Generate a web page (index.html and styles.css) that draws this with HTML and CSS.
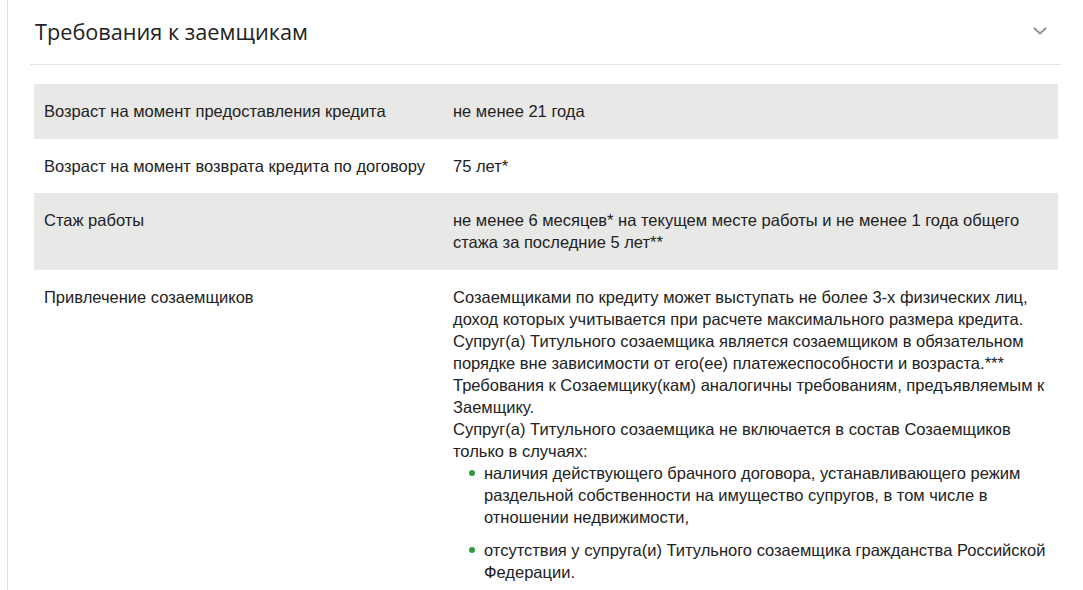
FILE: index.html
```html
<!DOCTYPE html>
<html lang="ru">
<head>
<meta charset="utf-8">
<title>Требования к заемщикам</title>
<link rel="stylesheet" href="styles.css">
</head>
<body>
<div class="page">
  <section class="block">
    <header class="block-head">
      <h2 class="block-title">Требования к заемщикам</h2>
      <svg class="chevron" width="14" height="9" viewBox="0 0 14 9"><path d="M1.5 1.5 L7 6.5 L12.5 1.5" fill="none" stroke="#9a9a9a" stroke-width="2.2" stroke-linecap="round" stroke-linejoin="round"/></svg>
    </header>
    <div class="table">
      <div class="row shaded">
        <div class="cell label">Возраст на момент предоставления кредита</div>
        <div class="cell value">не менее 21 года</div>
      </div>
      <div class="row">
        <div class="cell label">Возраст на момент возврата кредита по договору</div>
        <div class="cell value">75 лет*</div>
      </div>
      <div class="row shaded">
        <div class="cell label">Стаж работы</div>
        <div class="cell value">не менее 6 месяцев* на текущем месте работы и не менее 1 года общего стажа за последние 5 лет**</div>
      </div>
      <div class="row">
        <div class="cell label">Привлечение созаемщиков</div>
        <div class="cell value">
          Созаемщиками по кредиту может выступать не более 3-х физических лиц, доход которых учитывается при расчете максимального размера кредита.<br>
          Супруг(а) Титульного созаемщика является созаемщиком в обязательном порядке вне зависимости от его(ее) платежеспособности и возраста.***<br>
          Требования к Созаемщику(кам) аналогичны требованиям, предъявляемым к Заемщику.<br>
          Супруг(а) Титульного созаемщика не включается в состав Созаемщиков только в случаях:
          <ul class="dots">
            <li>наличия действующего брачного договора, устанавливающего режим раздельной собственности на имущество супругов, в том числе в отношении недвижимости,</li>
            <li>отсутствия у супруга(и) Титульного созаемщика гражданства Российской Федерации.</li>
          </ul>
        </div>
      </div>
    </div>
  </section>
</div>
</body>
</html>
```

FILE: styles.css
```css
html, body {
  margin: 0;
  padding: 0;
  background: #ffffff;
}
body {
  font-family: "Liberation Sans", Arial, sans-serif;
  color: #222222;
  overflow: hidden;
}
.page {
  margin-left: 7px;
  border-left: 1px solid #dedede;
  min-height: 590px;
  padding-left: 22px;
  width: 1031px;
}
.block-head {
  height: 64px;
  border-bottom: 1px solid #e3e3e3;
  display: flex;
  align-items: center;
  justify-content: space-between;
  padding: 0 14px 0 5px;
}
.block-title {
  margin: 0;
  font-family: "Open Sans", "Noto Sans", sans-serif;
  font-weight: 400;
  font-size: 21.7px;
  color: #222222;
  padding-bottom: 2px;
}
.chevron {
  display: block;
  margin-bottom: 2px;
}
.table {
  margin: 19px 3px 0 4px;
}
.row {
  display: grid;
  grid-template-columns: 409px 1fr;
  font-size: 16.5px;
  line-height: 22px;
}
.row.shaded {
  background: #e8e8e6;
}
.cell {
  padding: 16px 10px 16.5px 10px;
}
.dots {
  list-style: none;
  margin: 0;
  padding: 0 0 0 31px;
}
.dots li {
  position: relative;
  margin-bottom: 11px;
}
.dots li::before {
  content: "";
  position: absolute;
  left: -15px;
  top: 8px;
  width: 6px;
  height: 6px;
  border-radius: 50%;
  background: #2e9e3e;
}
```
